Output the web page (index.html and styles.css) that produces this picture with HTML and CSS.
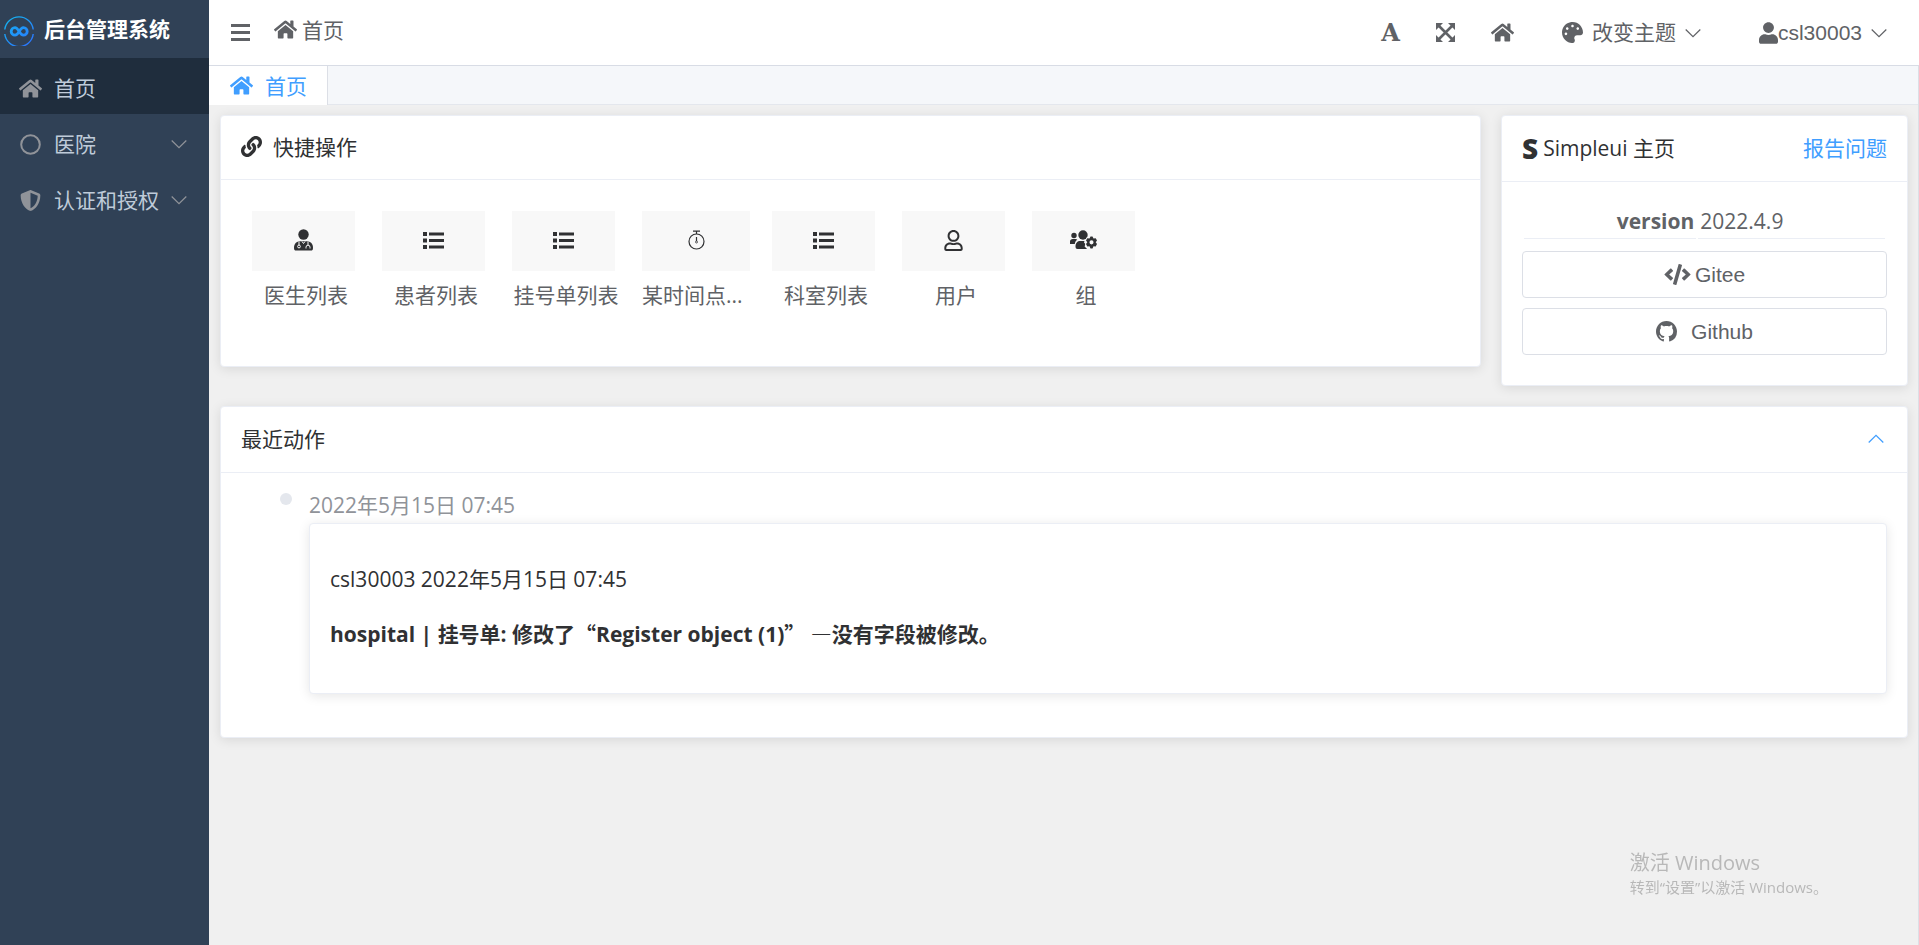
FILE: index.html
```html
<!DOCTYPE html>
<html lang="zh-Hans">
<head>
  <meta charset="UTF-8">
  <title>后台管理系统</title>
  <link rel="stylesheet" href="styles.css">
</head>
<body>
  <svg class="sprite" aria-hidden="true">
    <symbol id="i-home" viewBox="0 0 576 512"><path d="M280.37 148.26L96 300.11V464a16 16 0 0 0 16 16l112.06-.29a16 16 0 0 0 15.92-16V368a16 16 0 0 1 16-16h64a16 16 0 0 1 16 16v95.64a16 16 0 0 0 16 16.05L464 480a16 16 0 0 0 16-16V300L295.67 148.26a12.19 12.19 0 0 0-15.3 0zM571.6 251.47L488 182.56V44.05a12 12 0 0 0-12-12h-56a12 12 0 0 0-12 12v72.61L318.47 43a48 48 0 0 0-61 0L4.34 251.47a12 12 0 0 0-1.6 16.9l25.5 31A12 12 0 0 0 45.15 301l235.22-193.74a12.19 12.19 0 0 1 15.3 0L530.9 301a12 12 0 0 0 16.9-1.6l25.5-31a12 12 0 0 0-1.7-16.93z"/></symbol>
    <symbol id="i-shield" viewBox="0 0 512 512"><path d="M466.5 83.7l-192-80a48.15 48.15 0 0 0-36.9 0l-192 80C27.7 91.1 16 108.6 16 128c0 198.5 114.5 335.7 221.5 380.3 11.8 4.9 25.1 4.9 36.9 0C360.1 472.6 496 349.3 496 128c0-19.4-11.7-36.9-29.5-44.3zM256.1 446.3l-.1-381 175.9 73.3c-3.3 151.4-82.1 261.1-175.8 307.7z"/></symbol>
    <symbol id="i-down" viewBox="0 0 16 16"><path d="M.7 4.5L8 11.7l7.3-7.2" fill="none" stroke="currentColor" stroke-width="1.2"/></symbol>
    <symbol id="i-list" viewBox="0 0 21 21"><path d="M0 2h4v4H0zM0 8.500h4v4H0zM0 15h4v4H0zM6 2.500h15v3H6zM6 9h15v3H6zM6 15.500h15v3H6z"/></symbol>
    <symbol id="i-link" viewBox="0 0 512 512"><path d="M326.612 185.391c59.747 59.809 58.927 155.698.36 214.59-.11.12-.24.25-.36.37l-67.2 67.2c-59.27 59.27-155.699 59.262-214.96 0-59.27-59.26-59.27-155.7 0-214.96l37.106-37.106c9.84-9.84 26.786-3.3 27.294 10.606.648 17.722 3.826 35.527 9.69 52.721 1.986 5.822.567 12.262-3.783 16.612l-13.087 13.087c-28.026 28.026-28.905 73.66-1.155 101.96 28.024 28.579 74.086 28.749 102.325.51l67.2-67.19c28.191-28.191 28.073-73.757 0-101.83-3.701-3.694-7.429-6.564-10.341-8.569a16.037 16.037 0 0 1-6.947-12.606c-.396-10.567 3.348-21.456 11.698-29.806l21.054-21.055c5.521-5.521 14.182-6.199 20.584-1.731a152.482 152.482 0 0 1 20.522 17.197zM467.547 44.449c-59.261-59.262-155.69-59.27-214.96 0l-67.2 67.2c-.12.12-.25.25-.36.37-58.566 58.892-59.387 154.781.36 214.59a152.454 152.454 0 0 0 20.521 17.196c6.402 4.468 15.064 3.789 20.584-1.731l21.054-21.055c8.35-8.35 12.094-19.239 11.698-29.806a16.037 16.037 0 0 0-6.947-12.606c-2.912-2.005-6.64-4.875-10.341-8.569-28.073-28.073-28.191-73.639 0-101.83l67.2-67.19c28.239-28.239 74.3-28.069 102.325.51 27.75 28.3 26.872 73.934-1.155 101.96l-13.087 13.087c-4.35 4.35-5.769 10.79-3.783 16.612 5.864 17.194 9.042 34.999 9.69 52.721.509 13.906 17.454 20.446 27.294 10.606l37.106-37.106c59.271-59.259 59.271-155.699.001-214.959z"/></symbol>
  </svg>

  <div class="app">
    <aside class="sidebar">
      <div class="logo">
        <svg width="30" height="30" viewBox="0 0 30 30">
          <defs><linearGradient id="lg" gradientUnits="userSpaceOnUse" x1="3" y1="2" x2="24" y2="28"><stop offset="0" stop-color="#14b4f0"/><stop offset="1" stop-color="#2a78ff"/></linearGradient></defs>
          <g fill="none" stroke="url(#lg)">
            <path d="M.8 13.500A14.300 14.300 0 0 1 29.200 13.500M.8 18A14.300 14.300 0 0 0 29.200 18" stroke-width="1.400"/>
            <path d="M15.200 15.400C13.200 12.400 12.600 11.600 11 11.600a3.800 3.800 0 0 0 0 7.600c1.600 0 2.600-1 4.200-3.800s2.600-3.800 4.200-3.800a3.800 3.800 0 0 1 0 7.600c-1.600 0-2.600-1-4.200-3.800z" stroke-width="2.800"/>
          </g>
        </svg>
        <span>后台管理系统</span>
      </div>
      <nav>
        <a class="menu-item active" href="#"><svg class="icon-home"><use href="#i-home"/></svg><span>首页</span></a>
        <a class="menu-item" href="#"><svg class="icon-home" viewBox="0 0 23 21"><circle cx="11.500" cy="10.500" r="9.300" fill="none" stroke="currentColor" stroke-width="2"/></svg><span>医院</span><svg class="arrow"><use href="#i-down"/></svg></a>
        <a class="menu-item" href="#"><svg class="icon-home"><use href="#i-shield"/></svg><span>认证和授权</span><svg class="arrow"><use href="#i-down"/></svg></a>
      </nav>
    </aside>

    <div class="main">
      <header class="topbar">
        <button class="icon-btn" aria-label="折叠菜单"><svg width="19" height="17" viewBox="0 0 19 17"><path d="M0 0h19v3H0zM0 7h19v3H0zM0 14h19v3H0z"/></svg></button>
        <div class="breadcrumb"><svg class="icon-home"><use href="#i-home"/></svg><span>首页</span></div>
        <div class="tools">
          <button class="icon-btn font-btn" aria-label="字体">A</button>
          <button class="icon-btn" aria-label="全屏"><svg width="19" height="19" viewBox="0 0 19 19"><path d="M3 3l13 13M16 3L3 16" stroke="currentColor" stroke-width="2.600"/><path d="M0 0h7L0 7zM19 0v7l-7-7zM0 19v-7l7 7zM19 19h-7l7-7z"/></svg></button>
          <button class="icon-btn" aria-label="主页"><svg class="icon-home"><use href="#i-home"/></svg></button>
          <button class="drop theme"><svg width="21" height="21" viewBox="0 0 512 512"><path d="M204.300 5C104.900 24.400 24.800 104.300 5.200 203.400c-37 187 131.700 326.400 258.800 306.700 41.200-6.400 61.400-54.600 42.500-91.700-23.100-45.400 9.900-98.400 60.900-98.400h79.700c35.800 0 64.800-29.600 64.900-65.300C511.500 97.100 368.100-26.900 204.300 5zM96 320c-17.700 0-32-14.300-32-32s14.300-32 32-32 32 14.300 32 32-14.300 32-32 32zm32-128c-17.700 0-32-14.300-32-32s14.300-32 32-32 32 14.300 32 32-14.300 32-32 32zm128-64c-17.700 0-32-14.300-32-32s14.300-32 32-32 32 14.300 32 32-14.300 32-32 32zm128 64c-17.700 0-32-14.300-32-32s14.300-32 32-32 32 14.300 32 32-14.300 32-32 32z"/></svg><span>改变主题</span><svg class="arrow"><use href="#i-down"/></svg></button>
          <button class="drop user"><svg width="19" height="22" viewBox="0 0 448 512"><path d="M224 256c70.700 0 128-57.300 128-128S294.700 0 224 0 96 57.300 96 128s57.300 128 128 128zm89.600 32h-16.700c-22.200 10.200-46.900 16-72.900 16s-50.600-5.800-72.900-16h-16.700C60.200 288 0 348.200 0 422.400V464c0 26.500 21.500 48 48 48h352c26.500 0 48-21.500 48-48v-41.600c0-74.200-60.200-134.400-134.400-134.400z"/></svg><span>csl30003</span><svg class="arrow"><use href="#i-down"/></svg></button>
        </div>
      </header>

      <div class="workspace">
        <div class="tabs"><a class="tab" href="#"><svg class="icon-home"><use href="#i-home"/></svg><span>首页</span></a></div>

        <main class="content">
          <div class="row">
            <div class="col-18">
              <section class="card">
                <div class="card-header quick-header"><svg width="21" height="21"><use href="#i-link"/></svg><span>快捷操作</span></div>
                <div class="quick">
                  <a class="quick-item" href="#">
                    <span class="tile"><svg width="19" height="22" viewBox="0 0 19 22"><circle cx="9.500" cy="5.500" r="5.200"/><path d="M0 19c0-4 2-6.500 5.500-6.800h8C17 12.500 19 15 19 19c0 2-.8 2.500-2 2.500H2C.8 21.500 0 21 0 19z"/><path d="M5 12.500V16M14 12.500V16M12 19.500v-1.300a2 2 0 0 1 4 0v1.300M8 12.500l1.500 2 1.500-2" fill="none" stroke="#f8f8f8"/><circle cx="5" cy="17.500" r="1.400" fill="none" stroke="#f8f8f8"/></svg></span>
                    <span class="label">医生列表</span>
                  </a>
                  <a class="quick-item" href="#"><span class="tile"><svg width="21" height="21"><use href="#i-list"/></svg></span><span class="label">患者列表</span></a>
                  <a class="quick-item" href="#"><span class="tile"><svg width="21" height="21"><use href="#i-list"/></svg></span><span class="label">挂号单列表</span></a>
                  <a class="quick-item wide" href="#">
                    <span class="tile"><svg width="17" height="20" viewBox="0 0 17 20"><path d="M5 1.200h7M8.500 1v3M8.500 7v4" fill="none" stroke="currentColor" stroke-width="1.200"/><circle cx="8.500" cy="11.500" r="7.500" fill="none" stroke="currentColor" stroke-width="1.200"/><circle cx="8.500" cy="12" r="1" fill="none" stroke="currentColor" stroke-width=".8"/></svg></span>
                    <span class="label">某时间点...</span>
                  </a>
                  <a class="quick-item" href="#"><span class="tile"><svg width="21" height="21"><use href="#i-list"/></svg></span><span class="label">科室列表</span></a>
                  <a class="quick-item" href="#">
                    <span class="tile"><svg width="19" height="21" viewBox="0 0 448 512"><path d="M313.600 304c-28.700 0-42.500 16-89.600 16-47.100 0-60.800-16-89.600-16C60.200 304 0 364.200 0 438.400V464c0 26.500 21.500 48 48 48h352c26.500 0 48-21.500 48-48v-25.600c0-74.200-60.200-134.400-134.400-134.400zM400 464H48v-25.600c0-47.600 38.800-86.400 86.400-86.400 14.600 0 38.300 16 89.600 16 51.700 0 74.900-16 89.600-16 47.600 0 86.400 38.800 86.400 86.400V464zM224 288c79.500 0 144-64.500 144-144S303.500 0 224 0 80 64.500 80 144s64.500 144 144 144zm0-240c52.900 0 96 43.100 96 96s-43.100 96-96 96-96-43.100-96-96 43.100-96 96-96z"/></svg></span>
                    <span class="label">用户</span>
                  </a>
                  <a class="quick-item" href="#">
                    <span class="tile"><svg width="27" height="20" viewBox="0 0 27 20"><circle cx="4" cy="5.500" r="2.700"/><circle cx="13" cy="5" r="4.700"/><path d="M0 14v-2.500C0 10 1.200 9 2.700 9h2.800c.7 0 1.300.3 1.800.7C5.800 10.800 5 12 4.800 14zM5.500 16.500c0-3.500 2-5.500 4.800-5.500h4.200l-.5 1.500 1.400 1.500-.8 2.500 2.500 2.500H7.500c-1.300 0-2-.8-2-2.500z"/><path d="M20.500 6.500l-1 2-2.200-.3-1.300 2.200 1.300 1.900-1.300 1.800 1.300 2.300 2.200-.2 1 2.300h2l1-2.300 2.200.2 1.300-2.300-1.300-1.800 1.300-1.900-1.300-2.200-2.200.3-1-2zm1 3.800a2 2 0 1 1 0 4.100 2 2 0 0 1 0-4.100z" stroke="#f8f8f8" stroke-width="1.600" paint-order="stroke" fill-rule="evenodd"/></svg></span>
                    <span class="label">组</span>
                  </a>
                </div>
              </section>
            </div>

            <div class="col-6">
              <section class="card">
                <div class="card-header home-header"><b class="s-mark">S</b><span>Simpleui 主页</span><a class="report" href="#">报告问题</a></div>
                <div class="about">
                  <table class="version"><tr><th scope="row">version</th><td>2022.4.9</td></tr></table>
                  <button class="btn"><svg width="27" height="21" viewBox="0 0 640 512"><path d="M278.900 511.500l-61-17.700c-6.400-1.800-10-8.500-8.200-14.900L346.200 8.700c1.800-6.400 8.500-10 14.900-8.200l61 17.700c6.400 1.800 10 8.500 8.200 14.900L293.800 503.300c-1.900 6.400-8.500 10.100-14.900 8.200zm-114-112.200l43.500-46.400c4.600-4.900 4.300-12.700-.8-17.200L117 256l90.600-79.700c5.100-4.500 5.500-12.300.8-17.200l-43.500-46.400c-4.500-4.800-12.100-5.100-17-.5L3.800 247.200c-5.100 4.700-5.100 12.800 0 17.500l144.100 135.100c4.900 4.600 12.500 4.400 17-.5zm327.200.6l144.100-135.100c5.100-4.700 5.100-12.800 0-17.500L492.100 112.100c-4.800-4.500-12.400-4.300-17 .5L431.600 159c-4.600 4.900-4.300 12.700.8 17.200L523 256l-90.600 79.700c-5.100 4.500-5.500 12.300-.8 17.200l43.500 46.400c4.500 4.900 12.100 5.100 17 .6z"/></svg><span>Gitee</span></button>
                  <button class="btn github"><svg width="21" height="21" viewBox="0 0 16 16"><path d="M8 0C3.580 0 0 3.580 0 8c0 3.540 2.290 6.530 5.470 7.590.4.07.55-.17.55-.38 0-.19-.01-.82-.01-1.490-2.010.37-2.530-.49-2.690-.94-.09-.23-.48-.94-.82-1.130-.28-.15-.68-.52-.01-.53.63-.01 1.080.58 1.230.82.72 1.210 1.870.87 2.330.66.07-.52.28-.87.51-1.070-1.780-.2-3.640-.89-3.640-3.950 0-.87.31-1.590.82-2.150-.08-.2-.36-1.020.08-2.120 0 0 .67-.21 2.200.82.64-.18 1.320-.27 2-.27s1.360.09 2 .27c1.530-1.040 2.200-.82 2.200-.82.44 1.100.16 1.920.08 2.120.51.56.82 1.270.82 2.150 0 3.070-1.870 3.750-3.650 3.950.29.25.54.73.54 1.480 0 1.070-.01 1.930-.01 2.200 0 .21.15.46.55.38A8.010 8.010 0 0 0 16 8c0-4.420-3.580-8-8-8z"/></svg><span>Github</span></button>
                </div>
              </section>
            </div>
          </div>

          <section class="card">
            <div class="card-header recent-header"><span>最近动作</span><button class="icon-btn collapse" aria-label="收起"><svg class="arrow up"><use href="#i-down"/></svg></button></div>
            <ul class="timeline">
              <li>
                <time>2022年5月15日 07:45</time>
                <div class="card log">
                  <p>csl30003 2022年5月15日 07:45</p>
                  <p><b>hospital | 挂号单: 修改了<span class="cjk">“</span>Register object (1)<span class="cjk">”</span> <span class="cjk">—</span>没有字段被修改。</b></p>
                </div>
              </li>
            </ul>
          </section>
        </main>
      </div>
    </div>
  </div>

  <div class="activate"><div>激活 Windows</div><small>转到“设置”以激活 Windows。</small></div>
</body>
</html>
```
FILE: styles.css
```css
* {
  box-sizing: border-box;
}

body {
  margin: 0;
  font-family: "Open Sans", "Noto Sans CJK SC", sans-serif;
  font-size: 21px;
  line-height: 28px;
  color: #303133;
}

a {
  color: inherit;
  text-decoration: none;
}

button {
  font-family: "Liberation Sans", "Noto Sans CJK SC", sans-serif;
  font-size: 21px;
  line-height: 28px;
  color: #606266;
  background: none;
  border: none;
  padding: 0;
  cursor: pointer;
}

svg {
  fill: currentColor;
  flex: none;
  display: block;
}

.sprite {
  position: absolute;
  width: 0;
  height: 0;
}

.icon-home {
  width: 23px;
  height: 21px;
}

.arrow {
  width: 16px;
  height: 16px;
}

.app {
  display: flex;
  min-height: 100vh;
}

/* sidebar */
.sidebar {
  width: 209px;
  flex: none;
  background: #304156;
  color: #bfcbd9;
}

.logo {
  display: flex;
  align-items: center;
  gap: 10px;
  height: 58px;
  padding: 4px 0 0 4px;
  color: #fff;
  font-weight: bold;
}

.logo span {
  padding-bottom: 4px;
}

.menu-item {
  display: flex;
  align-items: center;
  gap: 12px;
  height: 56px;
  padding: 4px 22px 0 19px;
  white-space: nowrap;
}

.menu-item svg {
  color: #909399;
}

.menu-item.active {
  background: #1f2d3d;
}

.menu-item .arrow {
  margin-left: auto;
}

/* header */
.main {
  flex: 1;
  min-width: 0;
  display: flex;
  flex-direction: column;
}

.topbar {
  display: flex;
  align-items: center;
  height: 65px;
  padding: 0 32px 0 22px;
  color: #606266;
  background: #fff;
}

.breadcrumb {
  display: flex;
  align-items: center;
  gap: 5px;
  padding-bottom: 6px;
  margin-left: 24px;
}

.tools {
  display: flex;
  align-items: center;
  gap: 36px;
  margin-left: auto;
}

.font-btn {
  font-family: "DejaVu Serif", serif;
  font-weight: bold;
  font-size: 24px;
}

.drop {
  display: flex;
  align-items: center;
}

.theme {
  gap: 9px;
  margin-left: 12px;
}

.user {
  margin-left: 22px;
}

.user span {
  margin-right: 9px;
}

.workspace {
  flex: 1;
  background: #f0f0f0;
  border-top: 1px solid #d8dce5;
  border-right: 1px solid #dcdfe6;
}

.tabs {
  display: flex;
  height: 39px;
  background: #f5f7fa;
  border-bottom: 1px solid #e4e7ed;
}

.tab {
  display: flex;
  align-items: center;
  gap: 12px;
  height: 39px;
  padding: 0 20px 0 21px;
  color: #409eff;
  background: #fff;
  border-right: 1px solid #dcdfe6;
}

/* content */
.content {
  padding: 10px 10px 10px 11px;
}

.row {
  display: flex;
  align-items: flex-start;
  margin: 0 -10px 20px;
}

.col-18 {
  width: 75%;
  padding: 0 10px;
}

.col-6 {
  width: 25%;
  padding: 0 10px;
}

.card {
  background: #fff;
  border: 1px solid #ebeef5;
  border-radius: 4px;
  box-shadow: 0 2px 12px 0 rgba(0, 0, 0, 0.1);
}

.card-header {
  display: flex;
  align-items: center;
  height: 66px;
  padding: 0 20px 2px;
  border-bottom: 1px solid #ebeef5;
}

.quick-header {
  height: 64px;
  gap: 11px;
}

.quick {
  display: flex;
  flex-wrap: wrap;
  gap: 22px;
  padding: 31px 31px 57px;
}

.quick-item {
  width: 108px;
  color: #606266;
}

.tile {
  display: flex;
  align-items: center;
  justify-content: center;
  width: 103px;
  height: 60px;
  padding-bottom: 2px;
  background: #f8f8f8;
  color: #303133;
}

.label {
  display: flex;
  justify-content: center;
  padding-top: 10px;
  white-space: nowrap;
}

.wide .tile {
  width: 108px;
}

.wide .label {
  justify-content: flex-start;
}

.s-mark {
  font-size: 28px;
  font-weight: 800;
  margin-right: 5px;
}

.report {
  margin-left: auto;
  color: #409eff;
}

.about {
  padding: 20px 20px 30px;
}

.version {
  width: 100%;
  border-spacing: 2px;
  margin-bottom: 10px;
  color: #606266;
}

.version th,
.version td {
  padding: 3px 2px;
  border-bottom: 1px solid #ebeef5;
  text-align: left;
}

.version th {
  width: 48%;
  text-align: right;
}

.btn {
  display: flex;
  align-items: center;
  justify-content: center;
  gap: 4px;
  width: 100%;
  height: 47px;
  border: 1px solid #dcdfe6;
  border-radius: 4px;
}

.btn + .btn {
  margin-top: 10px;
}

.github {
  gap: 14px;
}

.collapse {
  margin-left: auto;
  padding-right: 3px;
  color: #409eff;
}

.up {
  transform: rotate(180deg);
}

.timeline {
  list-style: none;
  margin: 0;
  padding: 18px 20px 43px 60px;
}

.timeline li {
  position: relative;
  padding-left: 28px;
}

.timeline li::before {
  content: "";
  position: absolute;
  left: -1px;
  top: 2px;
  width: 12px;
  height: 12px;
  border-radius: 50%;
  background: #e4e7ed;
}

.timeline time {
  display: block;
  padding-bottom: 4px;
  color: #909399;
}

.log {
  padding: 20px 20px 18px;
}

.log p {
  margin: 21px 0 27px;
}

.cjk {
  font-family: "Noto Sans CJK SC", sans-serif;
  line-height: 1;
}

/* system notice */
.activate {
  position: fixed;
  right: 91px;
  bottom: 48px;
  color: #b8b8b8;
  font-size: 20px;
}

.activate small {
  display: block;
  font-size: 15px;
  line-height: 20px;
}
```
